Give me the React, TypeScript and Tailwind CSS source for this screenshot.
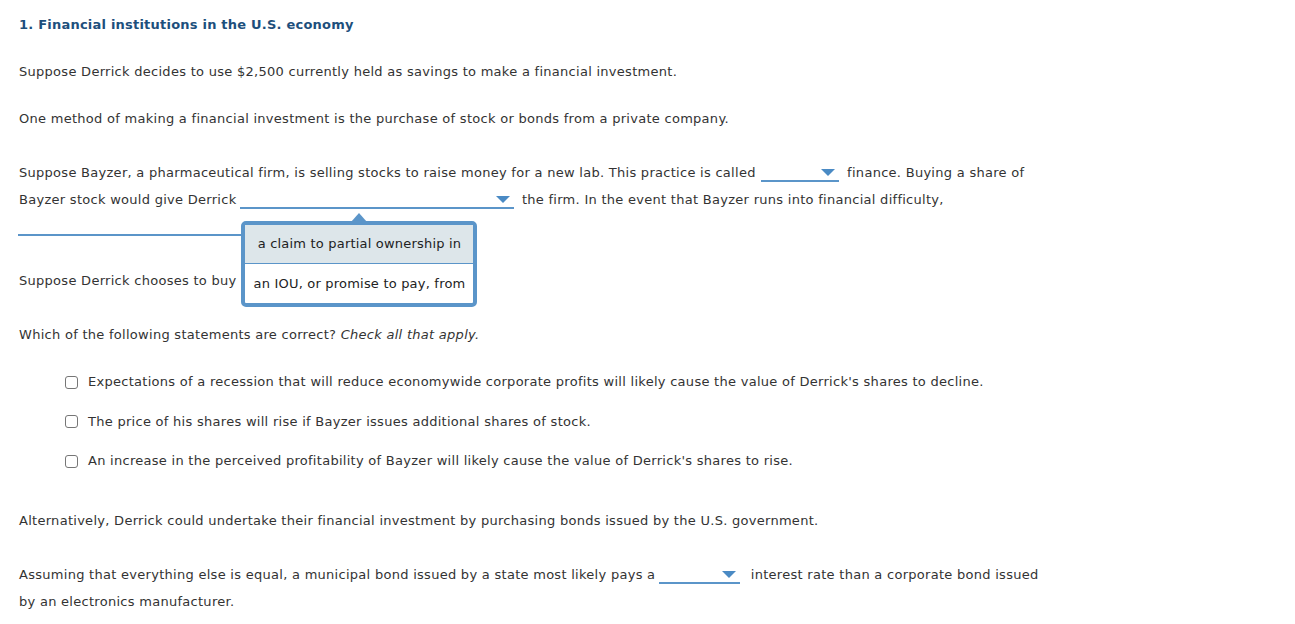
import React from 'react'

function Dropdown({ className, children }: { className: string; children?: React.ReactNode }) {
  return (
    <span className={`relative inline-block align-[-5px] h-[18px] border-b-2 border-[#5b95c9] ${className}`}>
      <span className="absolute right-[4px] top-[5px] w-0 h-0 border-l-[7px] border-r-[7px] border-t-[7px] border-l-transparent border-r-transparent border-t-[#4a8ac4]" />
      {children}
    </span>
  )
}

function Checkbox({ label }: { label: string }) {
  return (
    <label className="flex items-center gap-[10px] leading-[20px]">
      <span className="w-[13px] h-[13px] rounded-[3px] border border-[#767676] bg-white shrink-0" />
      <span>{label}</span>
    </label>
  )
}

const STATEMENTS = [
  "Expectations of a recession that will reduce economywide corporate profits will likely cause the value of Derrick's shares to decline.",
  'The price of his shares will rise if Bayzer issues additional shares of stock.',
  "An increase in the perceived profitability of Bayzer will likely cause the value of Derrick's shares to rise.",
]

export default function App() {
  return (
    <div
      className="min-h-screen bg-white text-[#333] text-[13px] tracking-[0.28px] px-[19px] pt-[15px]"
      style={{ fontFamily: '"DejaVu Sans", Verdana, sans-serif' }}
    >
      <h1 className="text-[#1d4f7c] font-bold text-[13px] tracking-[0.22px] leading-[20px]">
        1. Financial institutions in the U.S. economy
      </h1>

      <p className="mt-[27px] leading-[20px]">
        Suppose Derrick decides to use $2,500 currently held as savings to make a financial investment.
      </p>

      <p className="mt-[27px] leading-[20px]">
        One method of making a financial investment is the purchase of stock or bonds from a private company.
      </p>

      <p className="mt-[30px] leading-[27px] max-w-[1035px]">
        Suppose Bayzer, a pharmaceutical firm, is selling stocks to raise money for a new lab. This practice is called
        <Dropdown className="w-[78px] ml-[5px] mr-[4px]" /> finance. Buying a share of Bayzer stock would give Derrick
        <Dropdown className="w-[274px] ml-[4px] mr-[3px]">
          {/* open menu */}
          <span className="absolute left-[1px] top-[30px] z-10 w-[236px]">
            <span className="absolute left-1/2 -translate-x-1/2 -top-[8px] w-0 h-0 border-l-[8px] border-r-[8px] border-b-[9px] border-l-transparent border-r-transparent border-b-[#5b95c9]" />
            <span className="flex flex-col rounded-[5px] border-[4px] border-[#5b95c9] bg-white text-[#222] tracking-[0.2px] leading-[20px] overflow-hidden">
              <span className="h-[39px] flex items-center justify-center bg-[#dde6ea] border-b border-[#5b95c9]">
                a claim to partial ownership in
              </span>
              <span className="h-[39px] flex items-center justify-center whitespace-nowrap">
                an IOU, or promise to pay, from
              </span>
            </span>
          </span>
        </Dropdown>{' '}
        the firm. In the event that Bayzer runs into financial difficulty,{' '}
        <Dropdown className="w-[300px] -ml-[1px] mr-[3px]" /> will be paid first.
      </p>

      <p className="mt-[27px] leading-[27px]">
        Suppose Derrick chooses to buy <Dropdown className="w-[200px] ml-[3px]" />.
      </p>

      <p className="mt-[31px] leading-[20px]">
        Which of the following statements are correct? <em>Check all that apply.</em>
      </p>

      <div className="mt-[27px] ml-[46px] flex flex-col gap-[19.5px]">
        {STATEMENTS.map((s) => (
          <Checkbox key={s} label={s} />
        ))}
      </div>

      <p className="mt-[40px] leading-[20px]">
        Alternatively, Derrick could undertake their financial investment by purchasing bonds issued by the U.S. government.
      </p>

      <p className="mt-[30px] leading-[27px] max-w-[1035px]">
        Assuming that everything else is equal, a municipal bond issued by a state most likely pays a
        <Dropdown className="w-[81px] ml-[4px] mr-[6px]" /> interest rate than a corporate bond issued by an electronics
        manufacturer.
      </p>
    </div>
  )
}
